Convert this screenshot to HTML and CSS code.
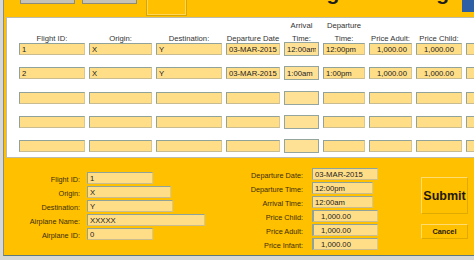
FILE: index.html
```html
<!DOCTYPE html>
<html lang="en">

<head>
    <meta charset="UTF-8">
    <meta name="viewport" content="width=device-width, initial-scale=1.0">
    <title>Flight Booking</title>
    <link rel="stylesheet" href="styles.css">
</head>

<body>
    <div class="app">
        <div class="topbar">
            <span class="tab"></span>
            <span class="tab tab-2"></span>
            <span class="tool"></span>
            <h1 class="title">Flight Booking</h1>
            <span class="help"></span>
        </div>

        <div class="sheet">
            <div class="sheet-head">
                <div>Flight ID:</div>
                <div>Origin:</div>
                <div>Destination:</div>
                <div>Departure Date</div>
                <div>Arrival<br>Time:</div>
                <div>Departure<br>Time:</div>
                <div>Price Adult:</div>
                <div>Price Child:</div>
                <div>Fare</div>
            </div>
            <div class="sheet-rows">
                <input type="text" value="1">
                <input type="text" value="X">
                <input type="text" value="Y">
                <input type="text" value="03-MAR-2015">
                <input type="text" class="arr" value="12:00am">
                <input type="text" value="12:00pm">
                <input type="text" class="price" value="1,000.00">
                <input type="text" class="price" value="1,000.00">
                <input type="text" value="">

                <input type="text" value="2">
                <input type="text" value="X">
                <input type="text" value="Y">
                <input type="text" value="03-MAR-2015">
                <input type="text" class="arr" value="1:00am">
                <input type="text" value="1:00pm">
                <input type="text" class="price" value="1,000.00">
                <input type="text" class="price" value="1,000.00">
                <input type="text" value="">

                <input type="text"><input type="text"><input type="text"><input type="text">
                <input type="text" class="arr"><input type="text"><input type="text"><input type="text"><input type="text">

                <input type="text"><input type="text"><input type="text"><input type="text">
                <input type="text" class="arr"><input type="text"><input type="text"><input type="text"><input type="text">

                <input type="text"><input type="text"><input type="text"><input type="text">
                <input type="text" class="arr"><input type="text"><input type="text"><input type="text"><input type="text">
            </div>
        </div>

        <form class="detail" action="#">
            <div class="fields fields-left">
                <label for="d-id">Flight ID:</label>
                <input type="text" id="d-id" class="w66" value="1">
                <label for="d-org">Origin:</label>
                <input type="text" id="d-org" class="w84" value="X">
                <label for="d-dst">Destination:</label>
                <input type="text" id="d-dst" class="w86" value="Y">
                <label for="d-pname">Airplane Name:</label>
                <input type="text" id="d-pname" class="w118" value="XXXXX">
                <label for="d-pid">Airplane ID:</label>
                <input type="text" id="d-pid" class="w66" value="0">
            </div>
            <div class="fields fields-right">
                <label for="d-date">Departure Date:</label>
                <input type="text" id="d-date" class="w66" value="03-MAR-2015">
                <label for="d-dtime">Departure Time:</label>
                <input type="text" id="d-dtime" class="w61" value="12:00pm">
                <label for="d-atime">Arrival Time:</label>
                <input type="text" id="d-atime" class="w61" value="12:00am">
                <label for="d-child">Price Child:</label>
                <input type="text" id="d-child" class="w66 price" value="1,000.00">
                <label for="d-adult">Price Adult:</label>
                <input type="text" id="d-adult" class="w66 price" value="1,000.00">
                <label for="d-inf">Price Infant:</label>
                <input type="text" id="d-inf" class="w66 price" value="1,000.00">
            </div>
            <div class="actions">
                <button type="submit" class="btn btn-submit">Submit</button>
                <button type="button" class="btn btn-cancel">Cancel</button>
            </div>
        </form>
    </div>
</body>

</html>
```

FILE: styles.css
```css
* {
    padding: 0;
    margin: 0;
    box-sizing: border-box;
}

html,
body {
    width: 100%;
    height: 100%;
    overflow: hidden;
}

body {
    background-color: #d6d8d8;
    font-family: "Liberation Sans", Arial, sans-serif;
}

.app {
    width: 560px;
    margin-left: 3px;
    border-left: 1px solid #8c8c84;
    border-bottom: 1px solid #5f7a78;
    background-color: #ffc000;
}

/* top strip, mostly scrolled off */
.topbar {
    display: flex;
    align-items: flex-start;
    height: 17px;
}

.tab {
    width: 55px;
    height: 4px;
    margin-left: 16px;
    background-color: #c6c3b6;
    border: 1px solid #8e8c78;
    border-top: none;
}

.tab-2 {
    margin-left: 7px;
}

.tool {
    width: 41px;
    height: 16px;
    margin-left: 9px;
    border: 1px solid #d9a600;
    border-top: none;
    box-shadow: inset 1px 0 0 #ffd65a, inset -1px -1px 0 #ffd65a;
}

.title {
    width: 159px;
    margin-left: 115px;
    margin-top: -18.5px;
    font-size: 21px;
    line-height: 22px;
    font-weight: bold;
    color: #1c1c1c;
    white-space: nowrap;
}

.help {
    width: 20px;
    height: 12px;
    margin-left: 1px;
    background-color: #2d5fa6;
}

/* grid panel */
.sheet {
    margin-left: 2px;
    width: 540px;
    height: 141px;
    padding: 2px 0 0 12px;
    background-color: #fff;
    border: 1px solid #bbbbb0;
}

.sheet-head,
.sheet-rows {
    display: grid;
    grid-template-columns: 70px 67px 70px 58px 39px 46px 47px 50px 50px;
}

.sheet-head {
    height: 25px;
    margin-bottom: -2px;
    align-items: end;
    font-size: 7.7px;
    line-height: 12.5px;
    color: #333;
    text-align: center;
}

.sheet-head > div {
    padding-right: 4px;
    white-space: nowrap;
}

.sheet-rows {
    row-gap: 12.25px;
}

input {
    display: block;
    height: 12px;
    padding: 0 2px;
    font-family: inherit;
    font-size: 7.7px;
    color: #222;
    background-color: #ffde87;
    border: 1px solid;
    border-color: #8fa39a #d8c890 #c8bc90 #8fa39a;
    outline: none;
}

.sheet-rows input {
    width: calc(100% - 4px);
}

.sheet-rows .arr {
    height: 14px;
    margin-top: -1px;
    margin-bottom: -1px;
    background-color: #ffe196;
    border-color: #93a59d;
}

input.price {
    padding-left: 7px;
}

/* detail form */
.detail {
    display: flex;
    height: 97px;
}

.fields {
    display: grid;
    row-gap: 2px;
    grid-auto-rows: 12px;
    align-content: start;
}

.fields label {
    justify-self: end;
    font-size: 7.3px;
    line-height: 12px;
    padding-top: 2px;
    margin-bottom: -2px;
    color: #3c2e08;
    white-space: nowrap;
}

.fields-left {
    grid-template-columns: 76px 118px;
    column-gap: 7px;
    padding-top: 14px;
}

.fields-right {
    grid-template-columns: 80px 66px;
    column-gap: 9px;
    padding-top: 10px;
    margin-left: 18px;
}

.fields .price {
    border-left-width: 2px;
}

.w61 { width: 61px; }
.w66 { width: 66px; }
.w84 { width: 84px; }
.w86 { width: 86px; }
.w118 { width: 118px; }

.actions {
    display: flex;
    flex-direction: column;
    gap: 10px;
    margin-left: 43px;
    padding-top: 19px;
}

.btn {
    width: 47px;
    font-family: inherit;
    font-weight: bold;
    color: #1e180a;
    background-color: #ffc000;
    border: 1px solid;
    border-color: #ffdc72 #e0ab00 #e0ab00 #ffdc72;
    cursor: pointer;
}

.btn-submit {
    height: 37px;
    font-size: 12.5px;
}

.btn-cancel {
    height: 15px;
    font-size: 7.3px;
}
```
